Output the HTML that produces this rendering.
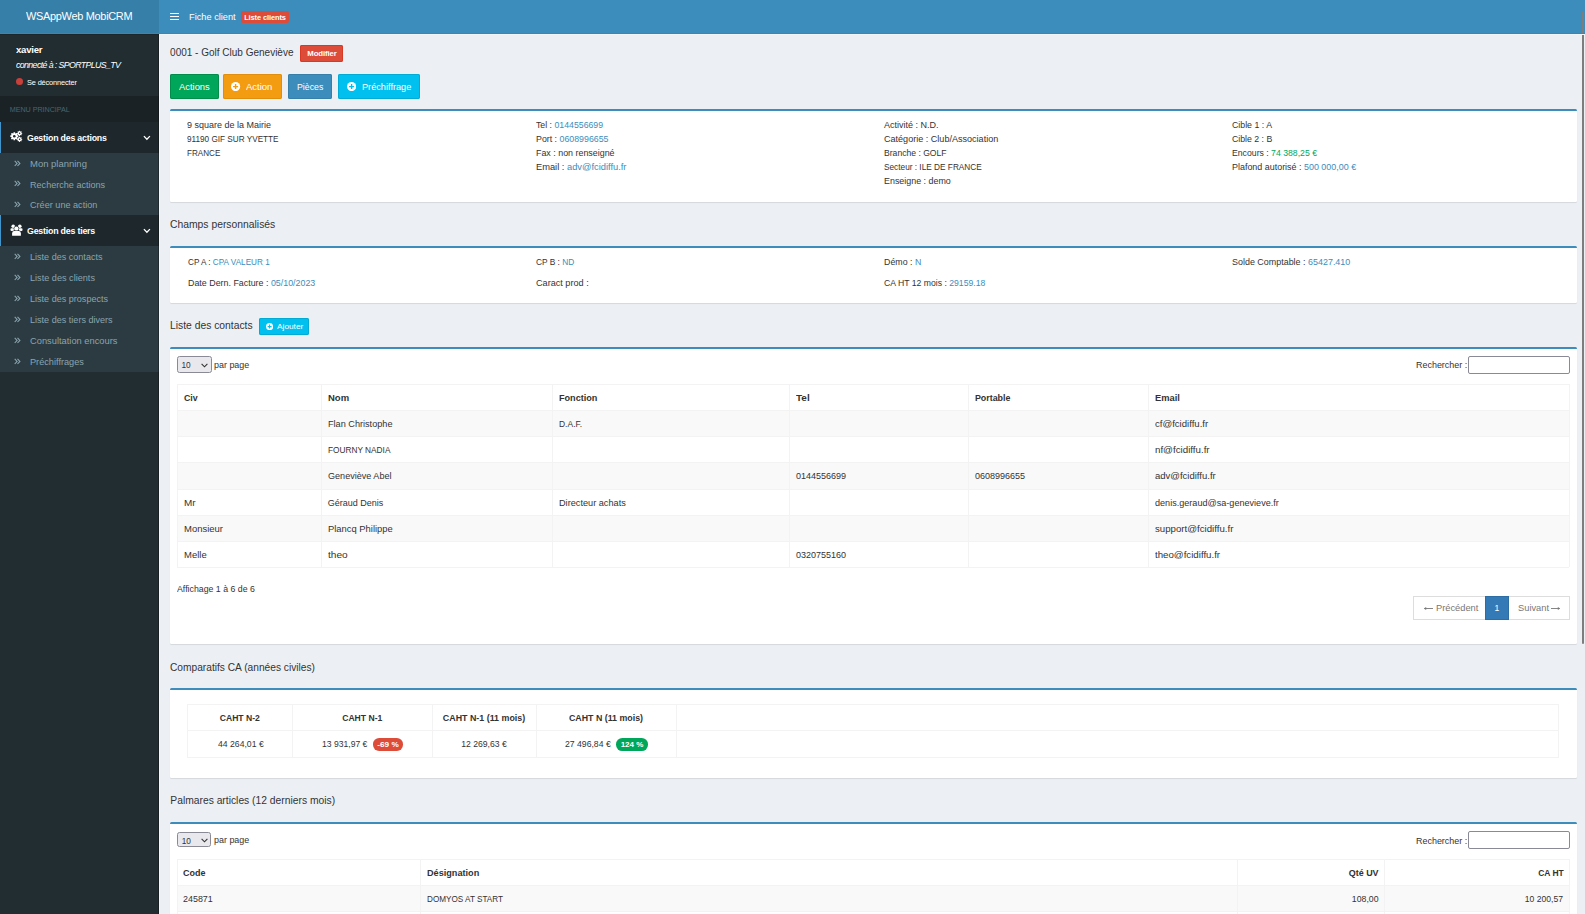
<!DOCTYPE html>
<html><head><meta charset="utf-8"><title>Fiche client</title>
<style>
html,body{margin:0;padding:0;}
body{width:1585px;height:914px;overflow:hidden;position:relative;background:#ecf0f5;font-family:"Liberation Sans",sans-serif;color:#333;}
.t{position:absolute;white-space:nowrap;}
.r{position:absolute;}
.box{position:absolute;background:#fff;border-top:2px solid #3c8dbc;box-sizing:border-box;border-radius:1.5px;box-shadow:0 1px 1px rgba(0,0,0,0.1);}
</style></head><body>
<div class="r" style="left:0.00px;top:0.00px;width:159.00px;height:34.00px;background:#367fa9;"></div>
<div class="r" style="left:159.00px;top:0.00px;width:1426.00px;height:34.00px;background:#3c8dbc;"></div>
<div class="t" style="left:26.10px;top:6px;font-size:10.9px;line-height:20px;color:#fff;letter-spacing:-0.3px;transform:scaleX(1.005);transform-origin:left center;">WSAppWeb MobiCRM</div>
<div class="r" style="left:170.00px;top:13.00px;width:9.00px;height:1.40px;background:#fff;"></div>
<div class="r" style="left:170.00px;top:15.80px;width:9.00px;height:1.40px;background:#fff;"></div>
<div class="r" style="left:170.00px;top:18.60px;width:9.00px;height:1.40px;background:#fff;"></div>
<div class="t" style="left:189.30px;top:7px;font-size:9.1px;line-height:20px;color:#fff;transform:scaleX(1.015);transform-origin:left center;">Fiche client</div>
<div class="r" style="left:241.00px;top:11.00px;width:48.00px;height:12.00px;background:#dd4b39;border-radius:2px;"></div>
<div class="t" style="left:-34.70px;width:600px;text-align:center;top:8px;font-size:7.5px;line-height:20px;color:#fff;font-weight:700;letter-spacing:-0.1px;transform:scaleX(0.991);transform-origin:center center;">Liste clients</div>
<div class="r" style="left:1582.00px;top:11.00px;width:2.00px;height:633.00px;background:#7d7d7d;border-radius:1px;"></div>
<div class="r" style="left:0.00px;top:34.00px;width:159.00px;height:880.00px;background:#222d32;"></div>
<div class="t" style="left:16.40px;top:40px;font-size:9.5px;line-height:20px;color:#fff;font-weight:700;letter-spacing:-0.25px;transform:scaleX(1.012);transform-origin:left center;">xavier</div>
<div class="t" style="left:16.40px;top:55px;font-size:8.6px;line-height:20px;color:#fff;letter-spacing:-0.6px;font-style:italic;transform:scaleX(1.024);transform-origin:left center;">connecté à : SPORTPLUS_TV</div>
<div class="r" style="left:16px;top:78px;width:7px;height:7px;border-radius:50%;background:#c9403a;"></div>
<div class="t" style="left:26.90px;top:73px;font-size:7.3px;line-height:20px;color:#fff;letter-spacing:-0.15px;transform:scaleX(1.014);transform-origin:left center;">Se déconnecter</div>
<div class="r" style="left:0.00px;top:95.70px;width:159.00px;height:26.00px;background:#1a2226;"></div>
<div class="t" style="left:9.80px;top:100px;font-size:7.2px;line-height:20px;color:#4b646f;letter-spacing:-0.05px;">MENU PRINCIPAL</div>
<div class="r" style="left:0.00px;top:122.00px;width:159.00px;height:31.00px;background:#1e282c;"></div>
<div class="r" style="left:0.00px;top:122.00px;width:1.20px;height:31.00px;background:#3f95cc;"></div>
<div class="t" style="left:27.30px;top:128px;font-size:8.6px;line-height:20px;color:#fff;font-weight:700;letter-spacing:-0.2px;transform:scaleX(1.023);transform-origin:left center;">Gestion des actions</div>
<svg class="r" style="left:143px;top:134.5px" width="8" height="6" viewBox="0 0 8 6"><path d="M0.9 1.1 L3.9 4.2 L6.9 1.1" fill="none" stroke="#fff" stroke-width="1.3"/></svg>
<svg class="r" style="left:9px;top:129.0px" width="15" height="15" viewBox="0 0 15 15"><g transform="translate(5.3 7.2)" fill="#fff"><circle r="3.0"/><rect x="-0.85" y="-4.0" width="1.7" height="8.0" rx="0.3" transform="rotate(0.0)"/><rect x="-0.85" y="-4.0" width="1.7" height="8.0" rx="0.3" transform="rotate(45.0)"/><rect x="-0.85" y="-4.0" width="1.7" height="8.0" rx="0.3" transform="rotate(90.0)"/><rect x="-0.85" y="-4.0" width="1.7" height="8.0" rx="0.3" transform="rotate(135.0)"/><circle r="1.3" fill="#1e282c"/></g><g transform="translate(10.6 4.3)" fill="#fff"><circle r="1.9"/><rect x="-0.55" y="-2.6" width="1.1" height="5.2" rx="0.3" transform="rotate(0.0)"/><rect x="-0.55" y="-2.6" width="1.1" height="5.2" rx="0.3" transform="rotate(45.0)"/><rect x="-0.55" y="-2.6" width="1.1" height="5.2" rx="0.3" transform="rotate(90.0)"/><rect x="-0.55" y="-2.6" width="1.1" height="5.2" rx="0.3" transform="rotate(135.0)"/><circle r="0.75" fill="#1e282c"/></g><g transform="translate(10.6 10.3)" fill="#fff"><circle r="1.9"/><rect x="-0.55" y="-2.6" width="1.1" height="5.2" rx="0.3" transform="rotate(0.0)"/><rect x="-0.55" y="-2.6" width="1.1" height="5.2" rx="0.3" transform="rotate(45.0)"/><rect x="-0.55" y="-2.6" width="1.1" height="5.2" rx="0.3" transform="rotate(90.0)"/><rect x="-0.55" y="-2.6" width="1.1" height="5.2" rx="0.3" transform="rotate(135.0)"/><circle r="0.75" fill="#1e282c"/></g></svg>
<div class="r" style="left:0.00px;top:153.00px;width:159.00px;height:62.00px;background:#2c3b41;"></div>
<svg class="r" style="left:13.5px;top:159.7px" width="7" height="7" viewBox="0 0 7 7"><path d="M0.7 0.8 L3.1 3.4 L0.7 6.0 M3.5 0.8 L5.9 3.4 L3.5 6.0" fill="none" stroke="#8aa4af" stroke-width="1.1"/></svg>
<div class="t" style="left:29.70px;top:154px;font-size:9.4px;line-height:20px;color:#8aa4af;transform:scaleX(1.011);transform-origin:left center;">Mon planning</div>
<svg class="r" style="left:13.5px;top:180.4px" width="7" height="7" viewBox="0 0 7 7"><path d="M0.7 0.8 L3.1 3.4 L0.7 6.0 M3.5 0.8 L5.9 3.4 L3.5 6.0" fill="none" stroke="#8aa4af" stroke-width="1.1"/></svg>
<div class="t" style="left:29.70px;top:175px;font-size:9.4px;line-height:20px;color:#8aa4af;transform:scaleX(0.968);transform-origin:left center;">Recherche actions</div>
<svg class="r" style="left:13.5px;top:201.0px" width="7" height="7" viewBox="0 0 7 7"><path d="M0.7 0.8 L3.1 3.4 L0.7 6.0 M3.5 0.8 L5.9 3.4 L3.5 6.0" fill="none" stroke="#8aa4af" stroke-width="1.1"/></svg>
<div class="t" style="left:29.70px;top:195px;font-size:9.4px;line-height:20px;color:#8aa4af;transform:scaleX(0.972);transform-origin:left center;">Créer une action</div>
<div class="r" style="left:0.00px;top:215.00px;width:159.00px;height:31.00px;background:#1e282c;"></div>
<div class="r" style="left:0.00px;top:215.00px;width:1.20px;height:31.00px;background:#3f95cc;"></div>
<div class="t" style="left:27.30px;top:221px;font-size:8.6px;line-height:20px;color:#fff;font-weight:700;letter-spacing:-0.2px;transform:scaleX(1.025);transform-origin:left center;">Gestion des tiers</div>
<svg class="r" style="left:143px;top:227.5px" width="8" height="6" viewBox="0 0 8 6"><path d="M0.9 1.1 L3.9 4.2 L6.9 1.1" fill="none" stroke="#fff" stroke-width="1.3"/></svg>
<svg class="r" style="left:10px;top:223.0px" width="13" height="14" viewBox="0 0 13 14"><g fill="#fff"><circle cx="3.2" cy="3.3" r="1.8"/><circle cx="9.8" cy="3.3" r="1.8"/><rect x="0.5" y="5.2" width="3.7" height="2.8" rx="1"/><rect x="8.8" y="5.2" width="3.7" height="2.8" rx="1"/></g><circle cx="6.4" cy="5.8" r="2.7" fill="#1e282c"/><circle cx="6.4" cy="5.8" r="2.2" fill="#fff"/><path d="M1.5 13.3 L1.5 10 Q1.5 7.6 4 7.6 L9 7.6 Q11.5 7.6 11.5 10 L11.5 13.3 Z" fill="#1e282c"/><path d="M2.1 12.8 L2.1 10.2 Q2.1 8.1 4.2 8.1 L8.8 8.1 Q10.9 8.1 10.9 10.2 L10.9 12.8 Z" fill="#fff"/></svg>
<div class="r" style="left:0.00px;top:246.00px;width:159.00px;height:126.00px;background:#2c3b41;"></div>
<svg class="r" style="left:13.5px;top:252.7px" width="7" height="7" viewBox="0 0 7 7"><path d="M0.7 0.8 L3.1 3.4 L0.7 6.0 M3.5 0.8 L5.9 3.4 L3.5 6.0" fill="none" stroke="#8aa4af" stroke-width="1.1"/></svg>
<div class="t" style="left:29.70px;top:247px;font-size:9.4px;line-height:20px;color:#8aa4af;transform:scaleX(0.966);transform-origin:left center;">Liste des contacts</div>
<svg class="r" style="left:13.5px;top:273.7px" width="7" height="7" viewBox="0 0 7 7"><path d="M0.7 0.8 L3.1 3.4 L0.7 6.0 M3.5 0.8 L5.9 3.4 L3.5 6.0" fill="none" stroke="#8aa4af" stroke-width="1.1"/></svg>
<div class="t" style="left:29.70px;top:268px;font-size:9.4px;line-height:20px;color:#8aa4af;transform:scaleX(0.974);transform-origin:left center;">Liste des clients</div>
<svg class="r" style="left:13.5px;top:294.7px" width="7" height="7" viewBox="0 0 7 7"><path d="M0.7 0.8 L3.1 3.4 L0.7 6.0 M3.5 0.8 L5.9 3.4 L3.5 6.0" fill="none" stroke="#8aa4af" stroke-width="1.1"/></svg>
<div class="t" style="left:29.70px;top:289px;font-size:9.4px;line-height:20px;color:#8aa4af;transform:scaleX(0.966);transform-origin:left center;">Liste des prospects</div>
<svg class="r" style="left:13.5px;top:315.7px" width="7" height="7" viewBox="0 0 7 7"><path d="M0.7 0.8 L3.1 3.4 L0.7 6.0 M3.5 0.8 L5.9 3.4 L3.5 6.0" fill="none" stroke="#8aa4af" stroke-width="1.1"/></svg>
<div class="t" style="left:29.70px;top:310px;font-size:9.4px;line-height:20px;color:#8aa4af;transform:scaleX(0.967);transform-origin:left center;">Liste des tiers divers</div>
<svg class="r" style="left:13.5px;top:336.7px" width="7" height="7" viewBox="0 0 7 7"><path d="M0.7 0.8 L3.1 3.4 L0.7 6.0 M3.5 0.8 L5.9 3.4 L3.5 6.0" fill="none" stroke="#8aa4af" stroke-width="1.1"/></svg>
<div class="t" style="left:29.70px;top:331px;font-size:9.4px;line-height:20px;color:#8aa4af;transform:scaleX(0.993);transform-origin:left center;">Consultation encours</div>
<svg class="r" style="left:13.5px;top:357.7px" width="7" height="7" viewBox="0 0 7 7"><path d="M0.7 0.8 L3.1 3.4 L0.7 6.0 M3.5 0.8 L5.9 3.4 L3.5 6.0" fill="none" stroke="#8aa4af" stroke-width="1.1"/></svg>
<div class="t" style="left:29.70px;top:352px;font-size:9.4px;line-height:20px;color:#8aa4af;transform:scaleX(0.979);transform-origin:left center;">Préchiffrages</div>
<div class="r" style="left:159.00px;top:33.00px;width:1426.00px;height:1.00px;background:#3288bc;"></div>
<div class="r" style="left:0.00px;top:33.00px;width:159.00px;height:1.00px;background:#3985b3;"></div>
<div class="r" style="left:0.00px;top:34.00px;width:158.00px;height:1.00px;background:rgba(0,0,0,0.12);"></div>
<div class="r" style="left:158.00px;top:34.00px;width:1.00px;height:880.00px;background:rgba(0,0,0,0.28);"></div>
<div class="r" style="left:159.00px;top:34.00px;width:1426.00px;height:1.00px;background:#f1f4f8;"></div>
<div class="r" style="left:159.00px;top:35.00px;width:1.00px;height:879.00px;background:#f2f5f9;"></div>
<div class="t" style="left:170.10px;top:43px;font-size:10.0px;line-height:20px;color:#333;">0001 - Golf Club Geneviève</div>
<div class="r" style="left:300.00px;top:45.00px;width:43.00px;height:17.00px;background:#dd4b39;border-radius:2px;box-shadow:inset 0 0 0 1px #d73925;"></div>
<div class="t" style="left:21.50px;width:600px;text-align:center;top:44px;font-size:7.6px;line-height:20px;color:#fff;font-weight:700;letter-spacing:-0.1px;transform:scaleX(1.027);transform-origin:center center;">Modifier</div>
<div class="r" style="left:170.00px;top:74.00px;width:49.00px;height:25.00px;background:#00a65a;border-radius:2px;box-shadow:inset 0 0 0 1px #008d4c;"></div>
<div class="t" style="left:179.40px;top:77px;font-size:9.2px;line-height:20px;color:#fff;transform:scaleX(1.022);transform-origin:left center;">Actions</div>
<div class="r" style="left:223.00px;top:74.00px;width:59.00px;height:25.00px;background:#f39c12;border-radius:2px;box-shadow:inset 0 0 0 1px #e08e0b;"></div>
<svg class="r" style="left:231.4px;top:81.9px" width="9.2" height="9.2" viewBox="0 0 20 20"><circle cx="10" cy="10" r="10" fill="#fff"/><path d="M10 4.5 V15.5 M4.5 10 H15.5" stroke="#f39c12" stroke-width="3"/></svg>
<div class="t" style="left:246.20px;top:77px;font-size:9.2px;line-height:20px;color:#fff;transform:scaleX(1.033);transform-origin:left center;">Action</div>
<div class="r" style="left:288.00px;top:74.00px;width:44.00px;height:25.00px;background:#3c8dbc;border-radius:2px;box-shadow:inset 0 0 0 1px #367fa9;"></div>
<div class="t" style="left:297.30px;top:77px;font-size:8.6px;line-height:20px;color:#fff;transform:scaleX(1.020);transform-origin:left center;">Pièces</div>
<div class="r" style="left:338.00px;top:74.00px;width:82.00px;height:25.00px;background:#00c0ef;border-radius:2px;box-shadow:inset 0 0 0 1px #00acd6;"></div>
<svg class="r" style="left:347.1px;top:81.9px" width="9.2" height="9.2" viewBox="0 0 20 20"><circle cx="10" cy="10" r="10" fill="#fff"/><path d="M10 4.5 V15.5 M4.5 10 H15.5" stroke="#00c0ef" stroke-width="3"/></svg>
<div class="t" style="left:362.30px;top:77px;font-size:9.0px;line-height:20px;color:#fff;transform:scaleX(1.019);transform-origin:left center;">Préchiffrage</div>
<div class="box" style="left:170px;top:109px;width:1407px;height:93px;"></div>
<div class="t" style="left:187.30px;top:115px;font-size:8.9px;line-height:20px;color:#333;transform:scaleX(1.012);transform-origin:left center;">9 square de la Mairie</div>
<div class="t" style="left:187.30px;top:129px;font-size:8.9px;line-height:20px;color:#333;transform:scaleX(0.922);transform-origin:left center;">91190 GIF SUR YVETTE</div>
<div class="t" style="left:187.30px;top:143px;font-size:8.9px;line-height:20px;color:#333;transform:scaleX(0.912);transform-origin:left center;">FRANCE</div>
<div class="t" style="left:535.80px;top:115px;font-size:9.0px;line-height:20px;color:#333;transform:scaleX(0.971);transform-origin:left center;">Tel : <span style="color:#3c8dbc">0144556699</span></div>
<div class="t" style="left:535.80px;top:129px;font-size:9.0px;line-height:20px;color:#333;transform:scaleX(0.979);transform-origin:left center;">Port : <span style="color:#3c8dbc">0608996655</span></div>
<div class="t" style="left:535.80px;top:143px;font-size:9.0px;line-height:20px;color:#333;transform:scaleX(0.987);transform-origin:left center;">Fax : non renseigné</div>
<div class="t" style="left:535.80px;top:157px;font-size:9.0px;line-height:20px;color:#333;transform:scaleX(1.033);transform-origin:left center;">Email : <span style="color:#3c8dbc">adv@fcidiffu.fr</span></div>
<div class="t" style="left:884.10px;top:115px;font-size:9.0px;line-height:20px;color:#333;">Activité : N.D.</div>
<div class="t" style="left:884.10px;top:129px;font-size:9.0px;line-height:20px;color:#333;transform:scaleX(1.006);transform-origin:left center;">Catégorie : Club/Association</div>
<div class="t" style="left:884.10px;top:143px;font-size:9.0px;line-height:20px;color:#333;transform:scaleX(0.955);transform-origin:left center;">Branche : GOLF</div>
<div class="t" style="left:884.10px;top:157px;font-size:9.0px;line-height:20px;color:#333;transform:scaleX(0.918);transform-origin:left center;">Secteur : ILE DE FRANCE</div>
<div class="t" style="left:884.10px;top:171px;font-size:9.0px;line-height:20px;color:#333;transform:scaleX(0.989);transform-origin:left center;">Enseigne : demo</div>
<div class="t" style="left:1232.00px;top:115px;font-size:9.0px;line-height:20px;color:#333;transform:scaleX(0.975);transform-origin:left center;">Cible 1 : A</div>
<div class="t" style="left:1232.00px;top:129px;font-size:9.0px;line-height:20px;color:#333;transform:scaleX(0.970);transform-origin:left center;">Cible 2 : B</div>
<div class="t" style="left:1232.00px;top:143px;font-size:9.0px;line-height:20px;color:#333;transform:scaleX(0.965);transform-origin:left center;">Encours : <span style="color:#00a65a">74 388,25 €</span></div>
<div class="t" style="left:1232.00px;top:157px;font-size:9.0px;line-height:20px;color:#333;transform:scaleX(0.992);transform-origin:left center;">Plafond autorisé : <span style="color:#3c8dbc">500 000,00 €</span></div>
<div class="t" style="left:170.20px;top:215px;font-size:10.3px;line-height:20px;color:#333;transform:scaleX(1.005);transform-origin:left center;">Champs personnalisés</div>
<div class="box" style="left:170px;top:246px;width:1407px;height:57px;"></div>
<div class="t" style="left:187.60px;top:252px;font-size:8.4px;line-height:20px;color:#333;transform:scaleX(0.975);transform-origin:left center;">CP A : <span style="color:#3c8dbc">CPA VALEUR 1</span></div>
<div class="t" style="left:187.60px;top:273px;font-size:8.8px;line-height:20px;color:#333;transform:scaleX(1.009);transform-origin:left center;">Date Dern. Facture : <span style="color:#3c8dbc">05/10/2023</span></div>
<div class="t" style="left:535.80px;top:252px;font-size:8.8px;line-height:20px;color:#333;transform:scaleX(0.947);transform-origin:left center;">CP B : <span style="color:#3c8dbc">ND</span></div>
<div class="t" style="left:535.80px;top:273px;font-size:8.8px;line-height:20px;color:#333;transform:scaleX(1.036);transform-origin:left center;">Caract prod :</div>
<div class="t" style="left:884.10px;top:252px;font-size:8.8px;line-height:20px;color:#333;">Démo : <span style="color:#3c8dbc">N</span></div>
<div class="t" style="left:884.10px;top:273px;font-size:8.8px;line-height:20px;color:#333;transform:scaleX(0.983);transform-origin:left center;">CA HT 12 mois : <span style="color:#3c8dbc">29159.18</span></div>
<div class="t" style="left:1232.00px;top:252px;font-size:8.8px;line-height:20px;color:#333;transform:scaleX(1.016);transform-origin:left center;">Solde Comptable : <span style="color:#3c8dbc">65427.410</span></div>
<div class="t" style="left:170.00px;top:316px;font-size:10.2px;line-height:20px;color:#333;transform:scaleX(1.013);transform-origin:left center;">Liste des contacts</div>
<div class="r" style="left:259.00px;top:318.00px;width:50.00px;height:17.00px;background:#00c0ef;border-radius:2px;box-shadow:inset 0 0 0 1px #00acd6;"></div>
<svg class="r" style="left:266.2px;top:322.9px" width="7.2" height="7.2" viewBox="0 0 20 20"><circle cx="10" cy="10" r="10" fill="#fff"/><path d="M10 4.5 V15.5 M4.5 10 H15.5" stroke="#00c0ef" stroke-width="3"/></svg>
<div class="t" style="left:276.80px;top:317px;font-size:8.1px;line-height:20px;color:#fff;transform:scaleX(1.025);transform-origin:left center;">Ajouter</div>
<div class="box" style="left:170px;top:347px;width:1407px;height:297px;"></div>
<div class="r" style="left:177.2px;top:356.2px;width:34.400000000000006px;height:16.5px;box-sizing:border-box;border:1px solid #8a8a96;border-radius:2.5px;background:#e9e9ed;"></div>
<div class="t" style="left:181.50px;top:355px;font-size:8.3px;line-height:20px;color:#333;">10</div>
<svg class="r" style="left:201.2px;top:362.5px" width="7" height="5" viewBox="0 0 7 5"><path d="M0.6 0.8 L3.5 3.8 L6.4 0.8" fill="none" stroke="#333" stroke-width="1.1"/></svg>
<div class="t" style="left:214.40px;top:355px;font-size:8.8px;line-height:20px;color:#333;transform:scaleX(1.016);transform-origin:left center;">par page</div>
<div class="t" style="left:1415.80px;top:355px;font-size:8.8px;line-height:20px;color:#333;transform:scaleX(1.017);transform-origin:left center;">Rechercher :</div>
<div class="r" style="left:1468px;top:356px;width:102px;height:17.600000000000023px;box-sizing:border-box;border:1px solid #8a8a96;border-radius:2px;background:#fff;"></div>
<div class="r" style="left:177.20px;top:410.00px;width:1392.30px;height:26.50px;background:#f9f9f9;"></div>
<div class="r" style="left:177.20px;top:462.50px;width:1392.30px;height:27.00px;background:#f9f9f9;"></div>
<div class="r" style="left:177.20px;top:515.50px;width:1392.30px;height:26.00px;background:#f9f9f9;"></div>
<div class="r" style="left:177.20px;top:383.80px;width:1392.30px;height:1.00px;background:#f3f3f3;"></div>
<div class="r" style="left:177.20px;top:409.50px;width:1392.30px;height:1.00px;background:#f3f3f3;"></div>
<div class="r" style="left:177.20px;top:436.00px;width:1392.30px;height:1.00px;background:#f3f3f3;"></div>
<div class="r" style="left:177.20px;top:462.00px;width:1392.30px;height:1.00px;background:#f3f3f3;"></div>
<div class="r" style="left:177.20px;top:489.00px;width:1392.30px;height:1.00px;background:#f3f3f3;"></div>
<div class="r" style="left:177.20px;top:515.00px;width:1392.30px;height:1.00px;background:#f3f3f3;"></div>
<div class="r" style="left:177.20px;top:541.00px;width:1392.30px;height:1.00px;background:#f3f3f3;"></div>
<div class="r" style="left:177.20px;top:567.00px;width:1392.30px;height:1.00px;background:#f3f3f3;"></div>
<div class="r" style="left:176.70px;top:384.30px;width:1.00px;height:183.20px;background:#f3f3f3;"></div>
<div class="r" style="left:321.00px;top:384.30px;width:1.00px;height:183.20px;background:#f3f3f3;"></div>
<div class="r" style="left:552.00px;top:384.30px;width:1.00px;height:183.20px;background:#f3f3f3;"></div>
<div class="r" style="left:789.10px;top:384.30px;width:1.00px;height:183.20px;background:#f3f3f3;"></div>
<div class="r" style="left:968.10px;top:384.30px;width:1.00px;height:183.20px;background:#f3f3f3;"></div>
<div class="r" style="left:1148.00px;top:384.30px;width:1.00px;height:183.20px;background:#f3f3f3;"></div>
<div class="r" style="left:1569.00px;top:384.30px;width:1.00px;height:183.20px;background:#f3f3f3;"></div>
<div class="t" style="left:183.50px;top:388px;font-size:8.9px;line-height:20px;color:#333;font-weight:700;transform:scaleX(0.992);transform-origin:left center;">Civ</div>
<div class="t" style="left:327.80px;top:388px;font-size:8.9px;line-height:20px;color:#333;font-weight:700;transform:scaleX(1.069);transform-origin:left center;">Nom</div>
<div class="t" style="left:558.80px;top:388px;font-size:8.9px;line-height:20px;color:#333;font-weight:700;transform:scaleX(1.025);transform-origin:left center;">Fonction</div>
<div class="t" style="left:795.90px;top:388px;font-size:8.9px;line-height:20px;color:#333;font-weight:700;transform:scaleX(1.126);transform-origin:left center;">Tel</div>
<div class="t" style="left:974.90px;top:388px;font-size:8.9px;line-height:20px;color:#333;font-weight:700;">Portable</div>
<div class="t" style="left:1154.80px;top:388px;font-size:8.9px;line-height:20px;color:#333;font-weight:700;transform:scaleX(1.047);transform-origin:left center;">Email</div>
<div class="t" style="left:327.80px;top:414px;font-size:9.0px;line-height:20px;color:#333;transform:scaleX(1.015);transform-origin:left center;">Flan Christophe</div>
<div class="t" style="left:558.80px;top:414px;font-size:9.0px;line-height:20px;color:#333;transform:scaleX(0.942);transform-origin:left center;">D.A.F.</div>
<div class="t" style="left:1154.80px;top:414px;font-size:9.0px;line-height:20px;color:#333;transform:scaleX(1.064);transform-origin:left center;">cf@fcidiffu.fr</div>
<div class="t" style="left:327.80px;top:440px;font-size:9.0px;line-height:20px;color:#333;transform:scaleX(0.920);transform-origin:left center;">FOURNY NADIA</div>
<div class="t" style="left:1154.80px;top:440px;font-size:9.0px;line-height:20px;color:#333;transform:scaleX(1.081);transform-origin:left center;">nf@fcidiffu.fr</div>
<div class="t" style="left:327.80px;top:466px;font-size:9.0px;line-height:20px;color:#333;transform:scaleX(1.007);transform-origin:left center;">Geneviève Abel</div>
<div class="t" style="left:795.90px;top:466px;font-size:9.0px;line-height:20px;color:#333;">0144556699</div>
<div class="t" style="left:974.90px;top:466px;font-size:9.0px;line-height:20px;color:#333;">0608996655</div>
<div class="t" style="left:1154.80px;top:466px;font-size:9.0px;line-height:20px;color:#333;transform:scaleX(1.056);transform-origin:left center;">adv@fcidiffu.fr</div>
<div class="t" style="left:183.50px;top:493px;font-size:9.0px;line-height:20px;color:#333;transform:scaleX(1.105);transform-origin:left center;">Mr</div>
<div class="t" style="left:327.80px;top:493px;font-size:9.0px;line-height:20px;color:#333;">Géraud Denis</div>
<div class="t" style="left:558.80px;top:493px;font-size:9.0px;line-height:20px;color:#333;transform:scaleX(1.019);transform-origin:left center;">Directeur achats</div>
<div class="t" style="left:1154.80px;top:493px;font-size:9.0px;line-height:20px;color:#333;transform:scaleX(1.009);transform-origin:left center;">denis.geraud@sa-genevieve.fr</div>
<div class="t" style="left:183.50px;top:519px;font-size:9.0px;line-height:20px;color:#333;transform:scaleX(1.054);transform-origin:left center;">Monsieur</div>
<div class="t" style="left:327.80px;top:519px;font-size:9.0px;line-height:20px;color:#333;transform:scaleX(1.044);transform-origin:left center;">Plancq Philippe</div>
<div class="t" style="left:1154.80px;top:519px;font-size:9.0px;line-height:20px;color:#333;transform:scaleX(1.074);transform-origin:left center;">support@fcidiffu.fr</div>
<div class="t" style="left:183.50px;top:545px;font-size:9.0px;line-height:20px;color:#333;transform:scaleX(1.055);transform-origin:left center;">Melle</div>
<div class="t" style="left:327.80px;top:545px;font-size:9.0px;line-height:20px;color:#333;transform:scaleX(1.124);transform-origin:left center;">theo</div>
<div class="t" style="left:795.90px;top:545px;font-size:9.0px;line-height:20px;color:#333;">0320755160</div>
<div class="t" style="left:1154.80px;top:545px;font-size:9.0px;line-height:20px;color:#333;transform:scaleX(1.076);transform-origin:left center;">theo@fcidiffu.fr</div>
<div class="t" style="left:177.10px;top:579px;font-size:8.7px;line-height:20px;color:#333;transform:scaleX(1.010);transform-origin:left center;">Affichage 1 à 6 de 6</div>
<div class="r" style="left:1413.3px;top:596.1px;width:156.5px;height:23.5px;box-sizing:border-box;border:1px solid #ddd;background:#fff;"></div>
<div class="r" style="left:1485.00px;top:596.10px;width:24.00px;height:23.50px;background:#337ab7;box-shadow:inset 0 0 0 1px #2e6da4;"></div>
<div class="t" style="left:1197.00px;width:600px;text-align:center;top:598px;font-size:8.6px;line-height:20px;color:#fff;">1</div>
<svg class="r" style="left:1422.5px;top:605px" width="12" height="7" viewBox="0 0 12 7"><path d="M1.5 3.5 H10" stroke="#777" stroke-width="0.9"/><path d="M0.8 3.5 L3.2 2.0 L3.2 5.0 Z" fill="#777"/></svg>
<div class="t" style="left:1435.60px;top:598px;font-size:9.1px;line-height:20px;color:#777;transform:scaleX(1.022);transform-origin:left center;">Précédent</div>
<div class="t" style="left:1517.50px;top:598px;font-size:9.2px;line-height:20px;color:#777;transform:scaleX(1.014);transform-origin:left center;">Suivant</div>
<svg class="r" style="left:1549px;top:605px" width="12" height="7" viewBox="0 0 12 7"><path d="M2 3.5 H10.5" stroke="#777" stroke-width="0.9"/><path d="M11.2 3.5 L8.8 2.0 L8.8 5.0 Z" fill="#777"/></svg>
<div class="t" style="left:170.00px;top:658px;font-size:10.2px;line-height:20px;color:#333;">Comparatifs CA (années civiles)</div>
<div class="box" style="left:170px;top:688px;width:1407px;height:90px;"></div>
<div class="r" style="left:187.40px;top:704.20px;width:1371.20px;height:1.00px;background:#f3f3f3;"></div>
<div class="r" style="left:187.40px;top:730.10px;width:1371.20px;height:1.00px;background:#f3f3f3;"></div>
<div class="r" style="left:187.40px;top:756.90px;width:1371.20px;height:1.00px;background:#f3f3f3;"></div>
<div class="r" style="left:186.90px;top:704.70px;width:1.00px;height:52.70px;background:#f3f3f3;"></div>
<div class="r" style="left:291.70px;top:704.70px;width:1.00px;height:52.70px;background:#f3f3f3;"></div>
<div class="r" style="left:431.80px;top:704.70px;width:1.00px;height:52.70px;background:#f3f3f3;"></div>
<div class="r" style="left:535.80px;top:704.70px;width:1.00px;height:52.70px;background:#f3f3f3;"></div>
<div class="r" style="left:675.90px;top:704.70px;width:1.00px;height:52.70px;background:#f3f3f3;"></div>
<div class="r" style="left:1558.10px;top:704.70px;width:1.00px;height:52.70px;background:#f3f3f3;"></div>
<div class="t" style="left:-60.20px;width:600px;text-align:center;top:708px;font-size:8.6px;line-height:20px;color:#333;font-weight:700;">CAHT N-2</div>
<div class="t" style="left:62.25px;width:600px;text-align:center;top:708px;font-size:8.6px;line-height:20px;color:#333;font-weight:700;">CAHT N-1</div>
<div class="t" style="left:184.30px;width:600px;text-align:center;top:708px;font-size:8.6px;line-height:20px;color:#333;font-weight:700;transform:scaleX(1.033);transform-origin:center center;">CAHT N-1 (11 mois)</div>
<div class="t" style="left:306.35px;width:600px;text-align:center;top:708px;font-size:8.6px;line-height:20px;color:#333;font-weight:700;transform:scaleX(1.026);transform-origin:center center;">CAHT N (11 mois)</div>
<div class="t" style="left:184.30px;width:600px;text-align:center;top:734px;font-size:8.6px;line-height:20px;color:#333;transform:scaleX(1.006);transform-origin:center center;">12 269,63 €</div>
<div class="t" style="left:218.00px;top:734px;font-size:8.5px;line-height:20px;color:#333;transform:scaleX(1.018);transform-origin:left center;">44 264,01 €</div>
<div class="t" style="left:322.00px;top:734px;font-size:8.5px;line-height:20px;color:#333;transform:scaleX(1.011);transform-origin:left center;">13 931,97 €</div>
<div class="r" style="left:373px;top:738.4px;width:30px;height:12.4px;border-radius:6.2px;background:#dd4b39;"></div>
<div class="t" style="left:88.00px;width:600px;text-align:center;top:735px;font-size:7.9px;line-height:20px;color:#fff;font-weight:700;transform:scaleX(1.042);transform-origin:center center;">-69 %</div>
<div class="t" style="left:565.00px;top:734px;font-size:8.5px;line-height:20px;color:#333;transform:scaleX(1.018);transform-origin:left center;">27 496,84 €</div>
<div class="r" style="left:615.8px;top:738.2px;width:32.2px;height:12.6px;border-radius:6.3px;background:#00a65a;"></div>
<div class="t" style="left:332.00px;width:600px;text-align:center;top:735px;font-size:7.9px;line-height:20px;color:#fff;font-weight:700;transform:scaleX(1.015);transform-origin:center center;">124 %</div>
<div class="t" style="left:170.30px;top:791px;font-size:10.3px;line-height:20px;color:#333;">Palmares articles (12 derniers mois)</div>
<div class="box" style="left:170px;top:822px;width:1407px;height:138px;"></div>
<div class="r" style="left:177.4px;top:831.6px;width:34.099999999999994px;height:15.899999999999977px;box-sizing:border-box;border:1px solid #8a8a96;border-radius:2.5px;background:#e9e9ed;"></div>
<div class="t" style="left:181.70px;top:831px;font-size:8.3px;line-height:20px;color:#333;">10</div>
<svg class="r" style="left:201.4px;top:837.9px" width="7" height="5" viewBox="0 0 7 5"><path d="M0.6 0.8 L3.5 3.8 L6.4 0.8" fill="none" stroke="#333" stroke-width="1.1"/></svg>
<div class="t" style="left:214.40px;top:830px;font-size:8.8px;line-height:20px;color:#333;transform:scaleX(1.016);transform-origin:left center;">par page</div>
<div class="t" style="left:1416.10px;top:831px;font-size:8.8px;line-height:20px;color:#333;transform:scaleX(1.017);transform-origin:left center;">Rechercher :</div>
<div class="r" style="left:1468.3px;top:831px;width:101.29999999999995px;height:17.799999999999955px;box-sizing:border-box;border:1px solid #8a8a96;border-radius:2px;background:#fff;"></div>
<div class="r" style="left:177.00px;top:885.50px;width:1392.60px;height:25.70px;background:#f9f9f9;"></div>
<div class="r" style="left:177.00px;top:859.00px;width:1392.60px;height:1.00px;background:#f3f3f3;"></div>
<div class="r" style="left:177.00px;top:885.00px;width:1392.60px;height:1.00px;background:#f3f3f3;"></div>
<div class="r" style="left:177.00px;top:910.70px;width:1392.60px;height:1.00px;background:#f3f3f3;"></div>
<div class="r" style="left:177.00px;top:936.50px;width:1392.60px;height:1.00px;background:#f3f3f3;"></div>
<div class="r" style="left:176.50px;top:859.50px;width:1.00px;height:77.50px;background:#f3f3f3;"></div>
<div class="r" style="left:419.80px;top:859.50px;width:1.00px;height:77.50px;background:#f3f3f3;"></div>
<div class="r" style="left:1237.00px;top:859.50px;width:1.00px;height:77.50px;background:#f3f3f3;"></div>
<div class="r" style="left:1383.90px;top:859.50px;width:1.00px;height:77.50px;background:#f3f3f3;"></div>
<div class="r" style="left:1569.10px;top:859.50px;width:1.00px;height:77.50px;background:#f3f3f3;"></div>
<div class="t" style="left:183.30px;top:863px;font-size:8.9px;line-height:20px;color:#333;font-weight:700;transform:scaleX(1.014);transform-origin:left center;">Code</div>
<div class="t" style="left:426.60px;top:863px;font-size:8.9px;line-height:20px;color:#333;font-weight:700;transform:scaleX(1.028);transform-origin:left center;">Désignation</div>
<div class="t" style="right:206.90px;top:863px;font-size:8.9px;line-height:20px;color:#333;font-weight:700;transform:scaleX(1.010);transform-origin:right center;">Qté UV</div>
<div class="t" style="right:21.70px;top:863px;font-size:8.9px;line-height:20px;color:#333;font-weight:700;transform:scaleX(0.955);transform-origin:right center;">CA HT</div>
<div class="t" style="left:183.30px;top:889px;font-size:9.0px;line-height:20px;color:#333;transform:scaleX(0.992);transform-origin:left center;">245871</div>
<div class="t" style="left:426.60px;top:889px;font-size:9.0px;line-height:20px;color:#333;transform:scaleX(0.906);transform-origin:left center;">DOMYOS AT START</div>
<div class="t" style="right:206.90px;top:889px;font-size:9.0px;line-height:20px;color:#333;transform:scaleX(0.970);transform-origin:right center;">108,00</div>
<div class="t" style="right:21.70px;top:889px;font-size:9.0px;line-height:20px;color:#333;transform:scaleX(0.954);transform-origin:right center;">10 200,57</div>
</body></html>
